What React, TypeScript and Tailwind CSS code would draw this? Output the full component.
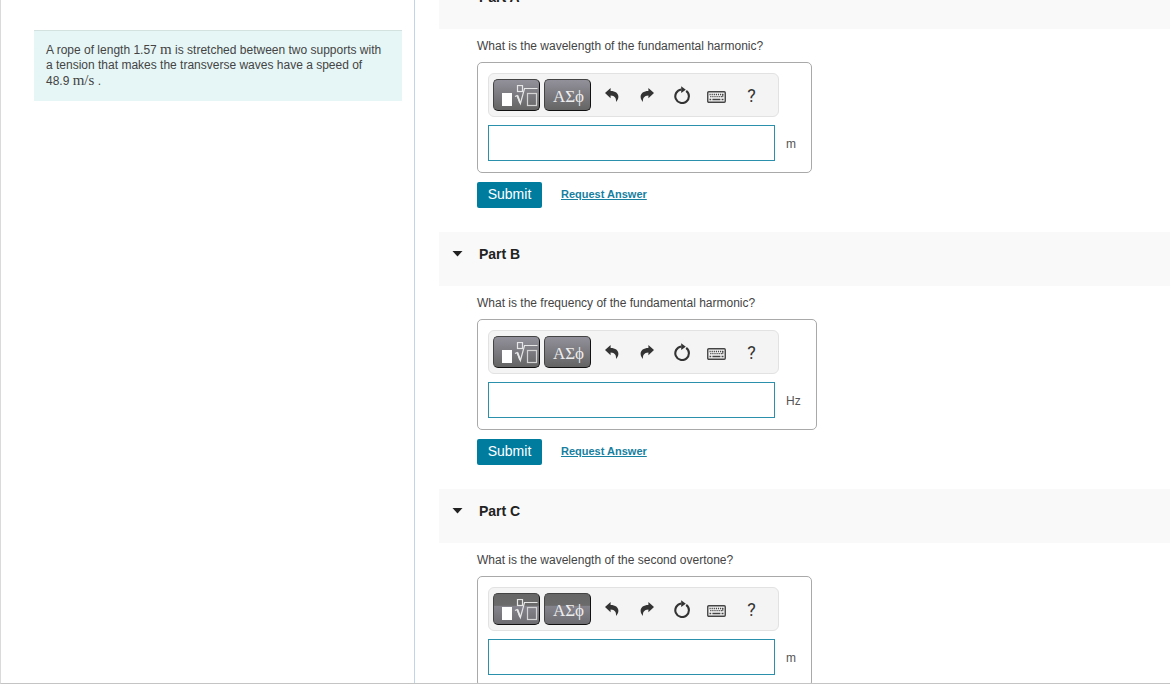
import { useState } from 'react';

interface PartProps {
  id: string;
  title: string;
  question: string;
  unit: string;
  glossy?: boolean;
}

const UndoIcon = ({ className = '' }: { className?: string }) => (
  <svg width="14" height="14" viewBox="0 0 14 14" className={className} aria-hidden="true">
    <path
      d="M0 5 5.6 0V3.1C10.4 3.1 13.4 5.4 13.4 8.8C13.4 10.9 12.4 12.6 11 14C11.4 10.2 10 7.7 5.6 7.5V10.2Z"
      fill="#333"
    />
  </svg>
);

const ResetIcon = () => (
  <svg width="16" height="18" viewBox="0 0 16 18" aria-hidden="true">
    <path d="M12.2 4.8A6.8 6.8 0 1 1 7.2 3.5" fill="none" stroke="#333" strokeWidth="2.1" />
    <path d="M7.2 0.2 11.8 3.7 7.2 7Z" fill="#333" />
  </svg>
);

const KeyboardIcon = () => (
  <svg width="19" height="12" viewBox="0 0 19 12" aria-hidden="true">
    <rect x="0.75" y="0.75" width="17.5" height="10.5" rx="1" fill="#f4f4f4" stroke="#444" strokeWidth="1.4" />
    <path d="M2.5 3.5H16.5" stroke="#444" strokeWidth="1.3" strokeDasharray="1.2 0.9" />
    <path d="M3.2 5.6H15" stroke="#444" strokeWidth="1.3" strokeDasharray="1.2 0.9" />
    <path d="M15.8 3V6.2" stroke="#444" strokeWidth="1" />
    <path d="M2.5 8.5H4.2M5.4 8.5H13.4M14.6 8.5H16.5" stroke="#444" strokeWidth="1.3" />
  </svg>
);

const TemplateIcon = () => (
  <svg width="37" height="22" viewBox="0 0 37 22" aria-hidden="true">
    <rect x="1" y="8" width="10" height="13" fill="#fff" />
    <rect x="16.5" y="0.5" width="5" height="6" fill="none" stroke="#e6e6e6" strokeWidth="1.2" />
    <path d="M14 11.5 16.2 10.5 19.4 18.5 23.5 3.5H36.5" fill="none" stroke="#e6e6e6" strokeWidth="1.2" />
    <path d="M16.4 10.5 19.2 18" stroke="#e6e6e6" strokeWidth="1.9" />
    <rect x="26.5" y="8.5" width="9" height="12" fill="none" stroke="#d4d4d4" strokeWidth="1.2" />
  </svg>
);

const AnswerPart = ({ id, title, question, unit, glossy = false }: PartProps) => {
  const [isOpen, setIsOpen] = useState(true);
  const [answer, setAnswer] = useState('');

  const paletteButton = `flex h-8 w-[47px] items-center rounded-[5px] border border-t-[#444] border-r-[#111] border-b-[#111] border-l-[#444] ${
    glossy
      ? 'bg-[linear-gradient(#666_0%,#6b6b6b_38%,#85838c_40%,#6d6d71_100%)]'
      : 'bg-[linear-gradient(#92909a,#646464)]'
  }`;

  return (
    <section className="pb-6">
      <h2 className="bg-[#f9f9f9]">
        <button
          type="button"
          aria-expanded={isOpen}
          onClick={() => setIsOpen(!isOpen)}
          className="flex h-[54px] w-full items-start pt-3 pl-[13px] text-left text-sm font-bold text-[#222]"
        >
          <svg width="11" height="6" viewBox="0 0 11 6" className="mt-[7px] mr-4 shrink-0" aria-hidden="true">
            <path d="M0.5 0H10.5L5.5 5.5Z" fill="#222" />
          </svg>
          {title}
        </button>
      </h2>

      {isOpen && (
        <form className="pl-[38px]" onSubmit={(e) => e.preventDefault()}>
          <label htmlFor={id} className="block pt-2 pb-[7px] text-xs leading-[18px] text-[#444]">
            {question}
          </label>

          <div className="w-fit rounded-[5px] border border-[#a9a9a9] pt-2.5 pr-[15px] pb-[11px] pl-2.5">
            <div className="flex h-11 w-[291px] items-start rounded-md border border-[#e2e2e2] bg-[#f4f4f4] pt-[5px] pl-1">
              <button type="button" aria-label="Templates" className={`${paletteButton} justify-end pt-0.5 pr-px`}>
                <TemplateIcon />
              </button>
              <button
                type="button"
                aria-label="Symbols"
                className={`${paletteButton} ml-1 justify-center pt-0.5 pl-0.5 font-['Liberation_Serif',serif] text-[17px] leading-none text-[#eee]`}
              >
                ΑΣϕ
              </button>
              <div className="ml-[3px] flex">
                <button type="button" aria-label="Undo" className="flex h-8 w-[35px] items-center justify-center">
                  <UndoIcon />
                </button>
                <button type="button" aria-label="Redo" className="flex h-8 w-[35px] items-center justify-center">
                  <UndoIcon className="-scale-x-100" />
                </button>
                <button type="button" aria-label="Reset" className="flex h-8 w-[35px] items-center justify-center">
                  <ResetIcon />
                </button>
                <button type="button" aria-label="Keyboard" className="flex h-8 w-[35px] items-center justify-center pt-1">
                  <KeyboardIcon />
                </button>
                <button
                  type="button"
                  aria-label="Help"
                  className="flex h-8 w-[35px] items-center justify-center pt-0.5 font-[Roboto,sans-serif] text-lg text-[#333]"
                >
                  ?
                </button>
              </div>
            </div>

            <div className="mt-2 flex items-center">
              <input
                id={id}
                type="text"
                value={answer}
                onChange={(e) => setAnswer(e.target.value)}
                className="h-9 w-[287px] border border-[#2a90ac] bg-white px-2 text-sm outline-none"
              />
              <span className="ml-[11px] pt-0.5 text-xs text-[#555]">{unit}</span>
            </div>
          </div>

          <div className="mt-[9px] flex items-center">
            <button type="submit" className="h-[26px] w-[65px] rounded-xs bg-[#007c9f] pb-0.5 text-sm leading-5 text-white">
              Submit
            </button>
            <a href="#answer" className="ml-[19px] pb-0.5 text-[11px] font-bold text-[#177f9f] underline">
              Request Answer
            </a>
          </div>
        </form>
      )}
    </section>
  );
};

const App = () => (
  <div className="flex h-screen overflow-hidden border-b border-l border-b-[#c4c4c4] border-l-[#dadada] bg-white font-['Liberation_Sans',Arial,sans-serif]">
    <aside className="w-[414px] shrink-0 border-r border-[#c1d5e8] pt-[30px] pr-3 pl-[33px]">
      <p className="border-t border-[#d3e2de] bg-[#e6f6f6] pt-[11px] pr-4 pb-3 pl-3 text-xs leading-[15px] text-[#444]">
        A rope of length 1.57 <span className="font-['Liberation_Serif',serif] text-[15px]">m</span> is stretched between
        two supports with a tension that makes the transverse waves have a speed of 48.9{' '}
        <span className="font-['Liberation_Serif',serif] text-[15px]">m/s</span> .
      </p>
    </aside>

    <main className="min-w-0 flex-1 overflow-hidden pl-6">
      <div className="-mt-[25px]">
        <AnswerPart id="part-a" title="Part A" question="What is the wavelength of the fundamental harmonic?" unit="m" />
        <AnswerPart id="part-b" title="Part B" question="What is the frequency of the fundamental harmonic?" unit="Hz" />
        <AnswerPart id="part-c" title="Part C" question="What is the wavelength of the second overtone?" unit="m" glossy />
      </div>
    </main>
  </div>
);

export default App;
